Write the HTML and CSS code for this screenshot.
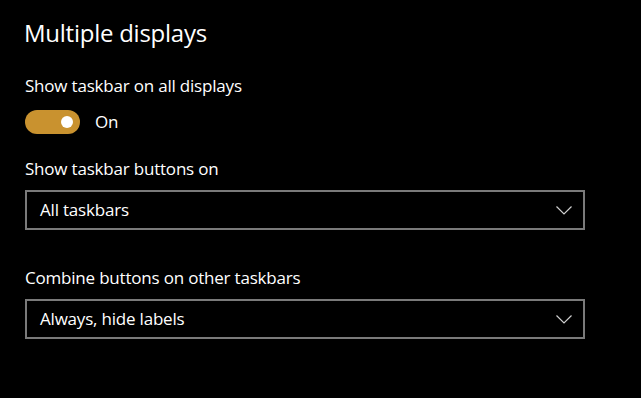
FILE: index.html
```html
<!DOCTYPE html>
<html>
<head>
<meta charset="utf-8">
<link rel="stylesheet" href="styles.css">
</head>
<body>
<div class="page">
  <h1 class="title">Multiple displays</h1>
  <div class="label first">Show taskbar on all displays</div>
  <div class="toggle-row">
    <span class="toggle"><span class="knob"></span></span>
    <span class="toggle-text">On</span>
  </div>
  <div class="label second">Show taskbar buttons on</div>
  <div class="select">
    <span class="select-text">All taskbars</span>
    <svg class="chevron" width="16" height="9" viewBox="0 0 16 9"><path d="M0.5 0.5 L8 8 L15.5 0.5" fill="none" stroke="#cfcfcf" stroke-width="1.2"/></svg>
  </div>
  <div class="label third">Combine buttons on other taskbars</div>
  <div class="select">
    <span class="select-text">Always, hide labels</span>
    <svg class="chevron" width="16" height="9" viewBox="0 0 16 9"><path d="M0.5 0.5 L8 8 L15.5 0.5" fill="none" stroke="#cfcfcf" stroke-width="1.2"/></svg>
  </div>
</div>
</body>
</html>
```
FILE: styles.css
```css
html, body {
  margin: 0;
  padding: 0;
  background: #000;
}
body {
  width: 641px;
  height: 398px;
  overflow: hidden;
  font-family: "Open Sans", "Noto Sans", sans-serif;
  color: #fff;
}
.page {
  padding: 17px 0 0 24px;
  display: flex;
  flex-direction: column;
  align-items: flex-start;
}
.title {
  margin: 0;
  font-size: 24px;
  font-weight: 400;
  line-height: 32px;
  letter-spacing: -0.25px;
}
.label {
  font-size: 17px;
  line-height: 22px;
  margin-left: 1px;
  letter-spacing: -0.2px;
}
.label.first { margin-top: 26px; }
.label.second { margin-top: 24px; }
.label.third { margin-top: 37px; }
.toggle-row {
  margin-top: 13px;
  margin-left: 1px;
  display: flex;
  align-items: center;
  gap: 15px;
}
.toggle {
  width: 55px;
  height: 24px;
  border-radius: 12px;
  background: #c9922f;
  display: flex;
  align-items: center;
  justify-content: flex-end;
  padding-right: 7px;
  box-sizing: border-box;
}
.knob {
  width: 12px;
  height: 12px;
  border-radius: 50%;
  background: #fff;
}
.toggle-text {
  font-size: 17px;
  line-height: 22px;
  letter-spacing: -0.3px;
}
.select {
  margin-top: 10px;
  margin-left: 1px;
  width: 560px;
  height: 40px;
  box-sizing: border-box;
  border: 2px solid #7a7a7a;
  display: flex;
  align-items: center;
  justify-content: space-between;
  padding: 0 11px 0 13px;
}
.select-text {
  font-size: 17px;
  line-height: 22px;
  letter-spacing: -0.2px;
}
.chevron {
  display: block;
}
```
